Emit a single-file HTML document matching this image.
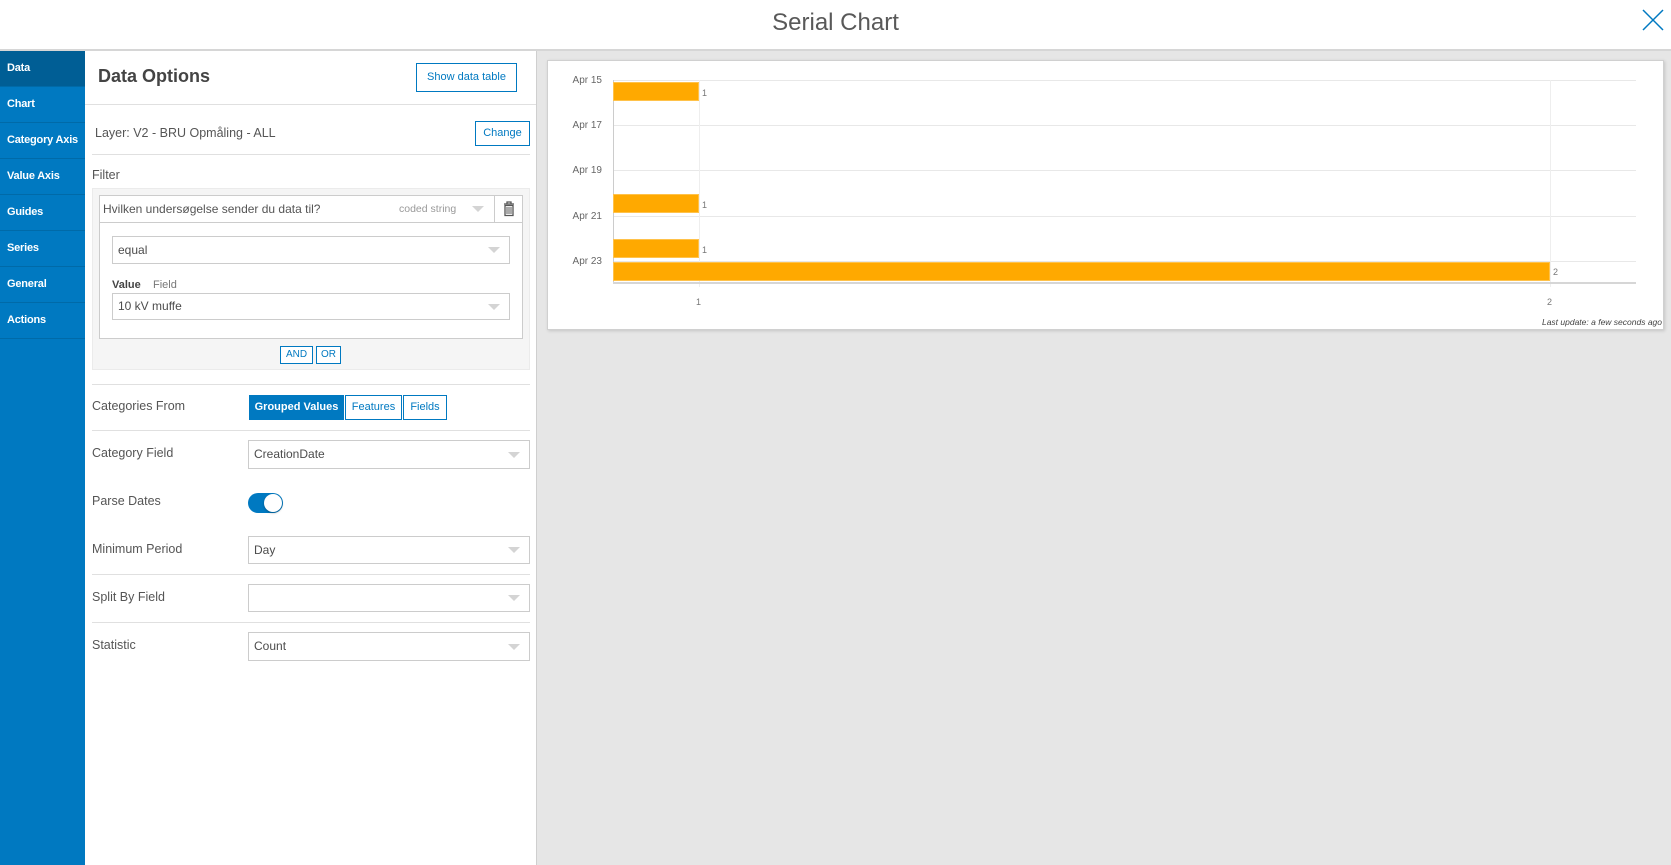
<!DOCTYPE html>
<html><head><meta charset="utf-8"><style>
*{box-sizing:border-box;margin:0;padding:0}
body{width:1671px;height:865px;overflow:hidden;font-family:"Liberation Sans",sans-serif;background:#fff;position:relative;color:#4c4c4c}
.a{position:absolute}
.nav{left:0;top:51px;width:85px;height:814px;background:#0079c1}
.ni{position:absolute;left:0;width:85px;height:36px;color:#fff;font-size:11px;font-weight:bold;padding-left:7px;line-height:35px;border-bottom:1px solid #006aa8;letter-spacing:-0.2px}
.sep{position:absolute;height:1px;background:#e0e0e0}
.btn{position:absolute;border:1px solid #0079c1;color:#0079c1;background:#fff;font-size:11px;text-align:center}
.sel{position:absolute;border:1px solid #ccc;background:#fff;font-size:12px;color:#4c4c4c;padding-left:5px}
.sel:after{content:"";position:absolute;right:9px;top:50%;margin-top:-3px;width:0;height:0;border-left:6px solid transparent;border-right:6px solid transparent;border-top:6px solid #d4d4d4}
.lab{position:absolute;left:92px;font-size:12.5px;color:#555}
.yl{position:absolute;font-size:10px;color:#666;width:50px;text-align:right;left:552px}
.gl{position:absolute;left:613px;width:1023px;height:1px;background:#e8e8e8}
.bar{position:absolute;left:613px;background:#ffa900;border:1px solid #ffc24a}
.vl{position:absolute;font-size:9px;color:#777}
</style></head><body>
<div class="a" style="left:0;top:0;width:1671px;height:51px;border-bottom:2px solid #d6d6d6"></div>
<div class="a" style="left:0;top:9px;width:1671px;text-align:center;font-size:24px;color:#595959">Serial Chart</div>
<svg class="a" style="left:1642px;top:9px" width="22" height="22"><path d="M1 1L21 21M21 1L1 21" stroke="#0079c1" stroke-width="1.5"/></svg>

<div class="a nav">
<div class="ni" style="top:0;background:#005e95">Data</div>
<div class="ni" style="top:36px">Chart</div>
<div class="ni" style="top:72px">Category Axis</div>
<div class="ni" style="top:108px">Value Axis</div>
<div class="ni" style="top:144px">Guides</div>
<div class="ni" style="top:180px">Series</div>
<div class="ni" style="top:216px">General</div>
<div class="ni" style="top:252px">Actions</div>
</div>

<div class="a" style="left:536px;top:51px;width:1135px;height:814px;background:#e6e6e6;border-left:1px solid #cfcfcf"></div>

<div class="a" style="left:98px;top:66px;font-size:18px;font-weight:bold;color:#444">Data Options</div>
<div class="btn" style="left:416px;top:63px;width:101px;height:29px;line-height:27px">Show data table</div>
<div class="sep" style="left:85px;top:104px;width:451px"></div>
<div class="a" style="left:95px;top:126px;font-size:12.5px;color:#555">Layer: V2 - BRU Opmåling - ALL</div>
<div class="btn" style="left:475px;top:121px;width:55px;height:25px;line-height:23px">Change</div>
<div class="sep" style="left:92px;top:154px;width:438px"></div>
<div class="a" style="left:92px;top:168px;font-size:12.5px;color:#555">Filter</div>

<div class="a" style="left:92px;top:188px;width:438px;height:182px;background:#f5f5f5;border:1px solid #ebebeb"></div>
<div class="a" style="left:99px;top:195px;width:424px;height:28px;border:1px solid #ccc;background:#fff"></div>
<div class="a" style="left:494px;top:195px;width:1px;height:28px;background:#ccc"></div>
<div class="a" style="left:103px;top:202px;font-size:12px;color:#555">Hvilken undersøgelse sender du data til?</div>
<div class="a" style="left:399px;top:203px;font-size:10.5px;color:#999">coded string</div>
<div class="a" style="left:472px;top:206px;border-left:6px solid transparent;border-right:6px solid transparent;border-top:6px solid #d4d4d4"></div>
<svg class="a" style="left:502px;top:201px" width="14" height="16"><path d="M2 3h10M5 3V1h4v2M3 4.5h8v10H3z" stroke="#555" stroke-width="1.3" fill="none"/><path d="M5 6v7M7 6v7M9 6v7" stroke="#555" stroke-width="1"/></svg>
<div class="a" style="left:99px;top:223px;width:424px;height:116px;border:1px solid #ccc;border-top:none;background:#fff"></div>
<div class="sel" style="left:112px;top:236px;width:398px;height:28px;line-height:26px">equal</div>
<div class="a" style="left:112px;top:279px;font-size:11px;color:#444"><b>Value</b>&nbsp;&nbsp;&nbsp;&nbsp;<span style="color:#777">Field</span></div>
<div class="sel" style="left:112px;top:293px;width:398px;height:27px;line-height:25px">10 kV muffe</div>
<div class="btn" style="left:280px;top:346px;width:33px;height:18px;line-height:16px;font-size:10px">AND</div>
<div class="btn" style="left:316px;top:346px;width:25px;height:18px;line-height:16px;font-size:10px">OR</div>

<div class="sep" style="left:92px;top:384px;width:438px"></div>
<div class="lab" style="top:399px">Categories From</div>
<div class="btn" style="left:249px;top:395px;width:95px;height:25px;line-height:23px;background:#0079c1;color:#fff;font-weight:bold">Grouped Values</div>
<div class="btn" style="left:345px;top:395px;width:57px;height:25px;line-height:23px">Features</div>
<div class="btn" style="left:403px;top:395px;width:44px;height:25px;line-height:23px">Fields</div>
<div class="sep" style="left:92px;top:430px;width:438px"></div>
<div class="lab" style="top:446px">Category Field</div>
<div class="sel" style="left:248px;top:440px;width:282px;height:29px;line-height:27px">CreationDate</div>
<div class="lab" style="top:494px">Parse Dates</div>
<div class="a" style="left:248px;top:493px;width:35px;height:20px;border-radius:10px;background:#0079c1"></div>
<div class="a" style="left:264px;top:494px;width:18px;height:18px;border-radius:9px;background:#fff;box-shadow:0 1px 2px rgba(0,0,0,.3)"></div>
<div class="lab" style="top:542px">Minimum Period</div>
<div class="sel" style="left:248px;top:536px;width:282px;height:28px;line-height:26px">Day</div>
<div class="sep" style="left:92px;top:574px;width:438px"></div>
<div class="lab" style="top:590px">Split By Field</div>
<div class="sel" style="left:248px;top:584px;width:282px;height:28px"></div>
<div class="sep" style="left:92px;top:622px;width:438px"></div>
<div class="lab" style="top:638px">Statistic</div>
<div class="sel" style="left:248px;top:632px;width:282px;height:29px;line-height:27px">Count</div>

<div class="a" style="left:547px;top:60px;width:1117px;height:270px;background:#fff;border:1px solid #d0d0d0;box-shadow:1px 1px 3px rgba(0,0,0,.15)"></div>
<div class="gl" style="top:80px"></div><div class="gl" style="top:125px"></div><div class="gl" style="top:170px"></div><div class="gl" style="top:216px"></div><div class="gl" style="top:261px"></div>
<div class="a" style="left:699px;top:80px;width:1px;height:207px;background:#eee"></div>
<div class="a" style="left:1550px;top:80px;width:1px;height:207px;background:#eee"></div>
<div class="a" style="left:613px;top:80px;width:1px;height:204px;background:#ccc"></div>
<div class="a" style="left:613px;top:282px;width:1023px;height:2px;background:#d6d6d6"></div>
<div class="yl" style="top:75px">Apr 15</div><div class="yl" style="top:120px">Apr 17</div><div class="yl" style="top:165px">Apr 19</div><div class="yl" style="top:211px">Apr 21</div><div class="yl" style="top:256px">Apr 23</div>
<div class="bar" style="top:82px;width:86px;height:19px"></div>
<div class="bar" style="top:194px;width:86px;height:19px"></div>
<div class="bar" style="top:239px;width:86px;height:19px"></div>
<div class="bar" style="top:262px;width:937px;height:19px"></div>
<div class="vl" style="left:702px;top:88px">1</div><div class="vl" style="left:702px;top:200px">1</div><div class="vl" style="left:702px;top:245px">1</div><div class="vl" style="left:1553px;top:267px">2</div>
<div class="vl" style="left:696px;top:297px">1</div><div class="vl" style="left:1547px;top:297px">2</div>
<div class="a" style="left:1450px;top:317px;width:212px;text-align:right;font-size:8.5px;font-style:italic;color:#444">Last update: a few seconds ago</div>
</body></html>
